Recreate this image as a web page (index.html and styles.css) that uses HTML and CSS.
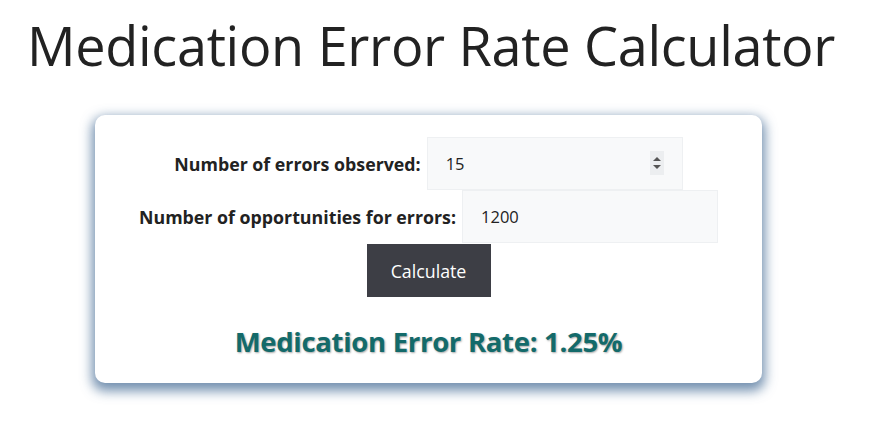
FILE: index.html
```
<!DOCTYPE html>
<html>
<head>
<meta charset="utf-8">
<link rel="stylesheet" href="styles.css">
</head>
<body>
<h1 class="title">Medication Error Rate Calculator</h1>
<div class="card">
  <div class="row">
    <label class="label" for="errors">Number of errors observed:</label>
    <span class="field-wrap">
      <input class="field" id="errors" type="text" value="15">
      <span class="spinner">
        <svg width="10" height="16" viewBox="0 0 10 16"><path d="M1 6 L5 2 L9 6 Z M1 10 L5 14 L9 10 Z" fill="#555"/></svg>
      </span>
    </span>
  </div>
  <div class="row">
    <label class="label" for="opps">Number of opportunities for errors:</label>
    <input class="field" id="opps" type="text" value="1200">
  </div>
  <div class="row">
    <button class="btn">Calculate</button>
  </div>
  <div class="result">Medication Error Rate: 1.25%</div>
</div>
</body>
</html>
```
FILE: styles.css
```
html, body {
  min-height: 430px;
}
body {
  margin: 0;
  padding-bottom: 20px;
  box-sizing: border-box;
  background: #fff;
  font-family: "Open Sans", "Noto Sans", sans-serif;
  color: #212529;
  overflow: hidden;
}
.title {
  margin: 12px 0 0 27px;
  font-weight: 400;
  font-size: 54px;
  line-height: 66px;
  color: #222;
  letter-spacing: -0.3px;
}
.card {
  width: 667px;
  margin: 37px 0 0 95px;
  box-sizing: border-box;
  background: #fff;
  border-radius: 10px;
  box-shadow: 0 5px 12px 3px rgba(70, 108, 150, 0.75);
  padding: 22px 0 30px;
  height: 268px;
}
.row {
  display: flex;
  justify-content: center;
  align-items: center;
}
.label {
  font-weight: 700;
  font-size: 17.8px;
  margin-right: 6px;
  color: #222;
}
.field-wrap {
  position: relative;
  display: inline-block;
}
.field {
  width: 256px;
  height: 53px;
  box-sizing: border-box;
  background: #f8f9fa;
  border: 1px solid #eef0f2;
  padding: 0 18px;
  font-family: inherit;
  font-size: 16.5px;
  color: #222;
  outline: none;
}
.spinner {
  position: absolute;
  right: 19px;
  top: 14px;
  width: 14px;
  height: 24px;
  background: #eceef0;
  display: flex;
  align-items: center;
  justify-content: center;
}
.btn {
  width: 124px;
  height: 53px;
  background: #3d3e45;
  color: #fff;
  border: none;
  font-family: inherit;
  font-size: 17.8px;
  margin-top: 1px;
}
.result {
  text-align: center;
  margin-top: 26px;
  font-weight: 700;
  font-size: 27.5px;
  letter-spacing: -0.3px;
  color: #136a6a;
  text-shadow: 1px 1px 2px rgba(0, 0, 0, 0.35);
}
```
